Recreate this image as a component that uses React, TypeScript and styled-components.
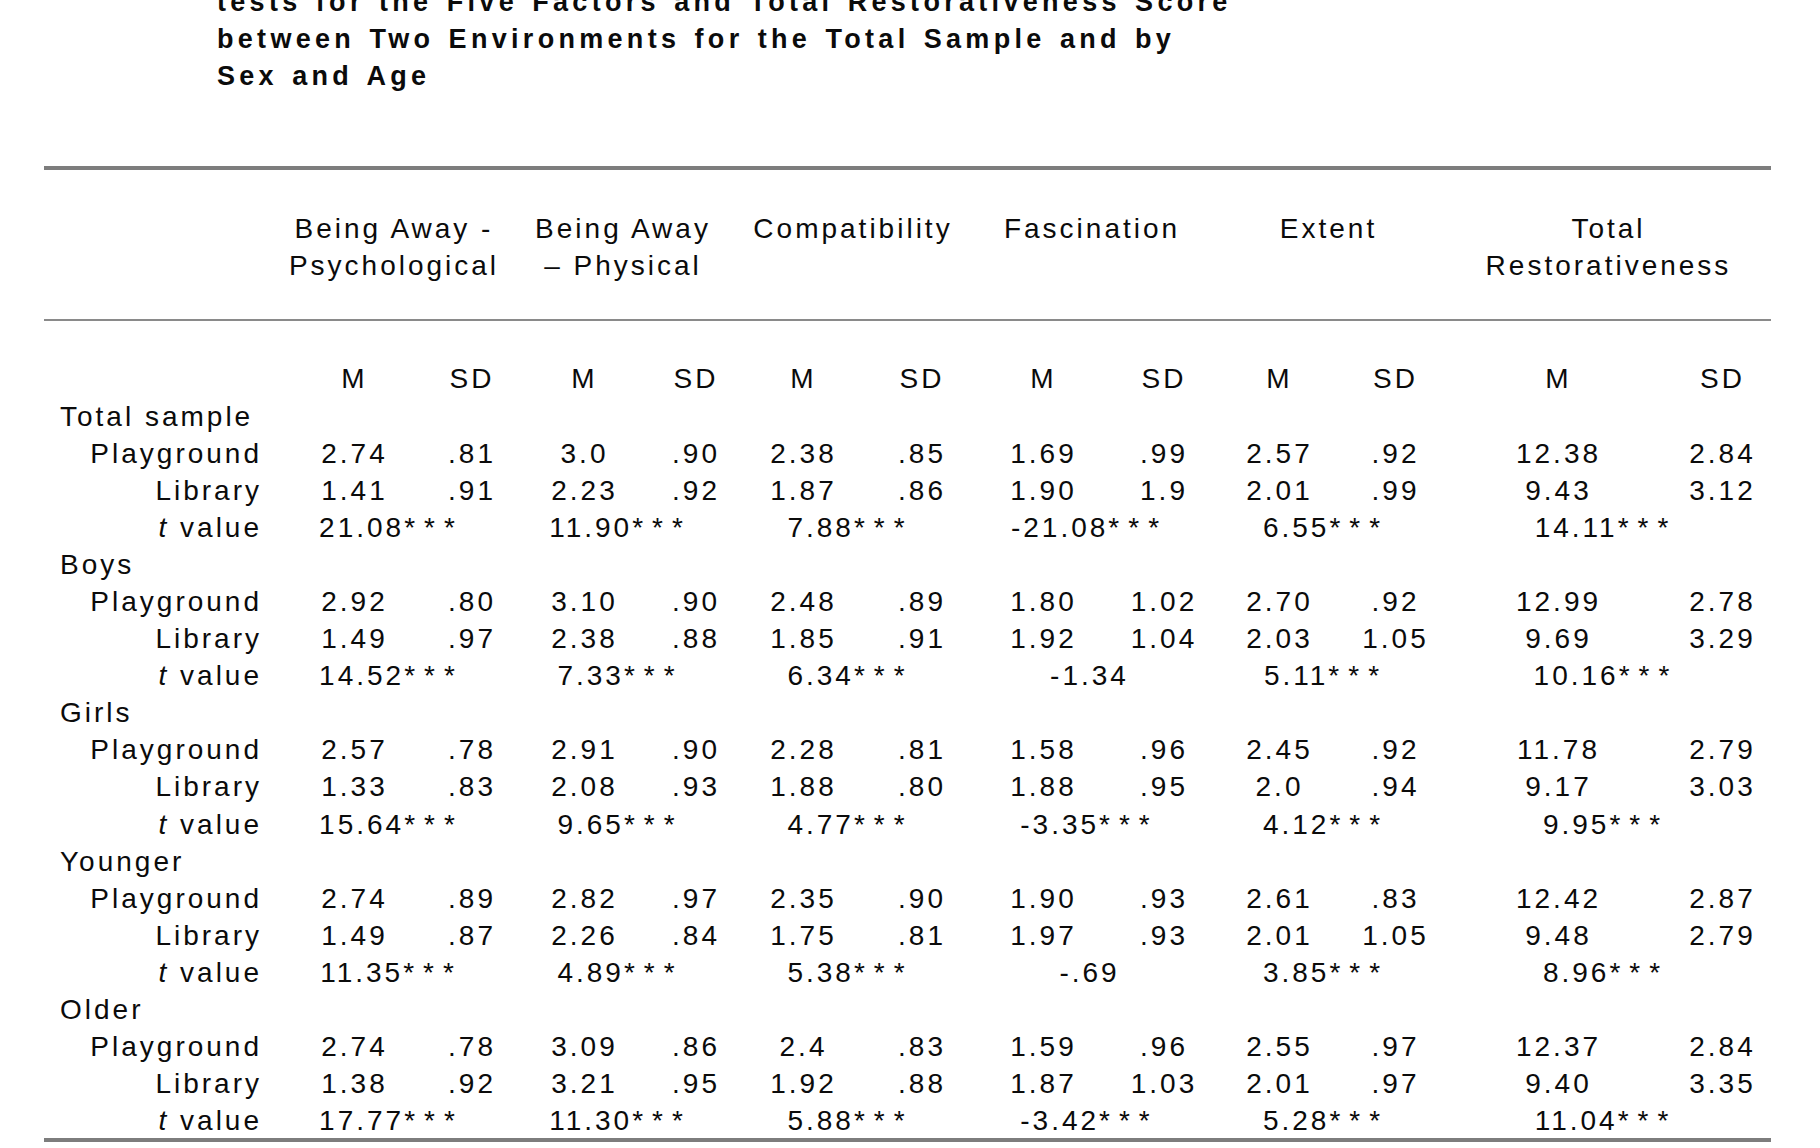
import React, { FC } from 'react';
import styled, { createGlobalStyle } from 'styled-components';

const COLUMNS =
  '231px 156px 79px 146px 77px 138px 99px 144px 97px 134px 98px 228px 100px';

const GlobalStyle = createGlobalStyle`
  html, body {
    margin: 0;
    padding: 0;
    background: #ffffff;
  }
  body {
    font-family: 'Liberation Sans', Arial, Helvetica, sans-serif;
    color: #0b0b0b;
    overflow: hidden;
  }
`;

const Page = styled.div`
  width: 1820px;
  height: 1148px;
  overflow: hidden;
`;

const Caption = styled.div`
  margin: -16px 0 0 217px;
  font-size: 27px;
  font-weight: 700;
  letter-spacing: 4.3px;
  word-spacing: 2.5px;
  line-height: 37px;
`;

const CaptionLine = styled.div`
  white-space: nowrap;
`;

const Table = styled.div`
  width: 1727px;
  margin: 71px 0 0 44px;
  border-top: 4px solid #7d7d7d;
  border-bottom: 4px solid #7d7d7d;
  font-size: 28px;
  letter-spacing: 3px;
`;

const HeadRow = styled.div`
  display: grid;
  grid-template-columns: ${COLUMNS};
  padding: 39.5px 0 35.5px;
  border-bottom: 2px solid #8a8a8a;
  line-height: 37px;
`;

const HeadCell = styled.div`
  grid-column: span 2;
  text-align: center;
  padding-left: 3px;
`;

const StatRow = styled.div<{ $height: number }>`
  display: grid;
  grid-template-columns: ${COLUMNS};
  height: ${(p) => p.$height}px;
  line-height: ${(p) => p.$height}px;
  white-space: nowrap;
`;

const SubHead = styled.div`
  padding-top: 37.5px;
`;

const Body = styled.div`
  margin-bottom: -1.5px;
`;

const Label = styled.div<{ $group?: boolean }>`
  text-align: ${(p) => (p.$group ? 'left' : 'right')};
  padding: ${(p) => (p.$group ? '0 0 0 16px' : '0 13px 0 0')};
`;

const Value = styled.div<{ $wide?: boolean }>`
  grid-column: ${(p) => (p.$wide ? 'span 2' : 'auto')};
  text-align: center;
  padding: ${(p) => (p.$wide ? '0 2px 0 0' : '0 0 0 3px')};
`;

const Stars = styled.span`
  letter-spacing: 9px;
`;

const Italic = styled.span`
  font-style: italic;
`;

type Pair = [string, string];

interface Group {
  name: string;
  playground: Pair[];
  library: Pair[];
  t: string[];
}

const headers: [string, string][] = [
  ['Being Away -', 'Psychological'],
  ['Being Away', '– Physical'],
  ['Compatibility', ''],
  ['Fascination', ''],
  ['Extent', ''],
  ['Total', 'Restorativeness'],
];

const groups: Group[] = [
  {
    name: 'Total sample',
    playground: [['2.74', '.81'], ['3.0', '.90'], ['2.38', '.85'], ['1.69', '.99'], ['2.57', '.92'], ['12.38', '2.84']],
    library: [['1.41', '.91'], ['2.23', '.92'], ['1.87', '.86'], ['1.90', '1.9'], ['2.01', '.99'], ['9.43', '3.12']],
    t: ['21.08***', '11.90***', '7.88***', '-21.08***', '6.55***', '14.11***'],
  },
  {
    name: 'Boys',
    playground: [['2.92', '.80'], ['3.10', '.90'], ['2.48', '.89'], ['1.80', '1.02'], ['2.70', '.92'], ['12.99', '2.78']],
    library: [['1.49', '.97'], ['2.38', '.88'], ['1.85', '.91'], ['1.92', '1.04'], ['2.03', '1.05'], ['9.69', '3.29']],
    t: ['14.52***', '7.33***', '6.34***', '-1.34', '5.11***', '10.16***'],
  },
  {
    name: 'Girls',
    playground: [['2.57', '.78'], ['2.91', '.90'], ['2.28', '.81'], ['1.58', '.96'], ['2.45', '.92'], ['11.78', '2.79']],
    library: [['1.33', '.83'], ['2.08', '.93'], ['1.88', '.80'], ['1.88', '.95'], ['2.0', '.94'], ['9.17', '3.03']],
    t: ['15.64***', '9.65***', '4.77***', '-3.35***', '4.12***', '9.95***'],
  },
  {
    name: 'Younger',
    playground: [['2.74', '.89'], ['2.82', '.97'], ['2.35', '.90'], ['1.90', '.93'], ['2.61', '.83'], ['12.42', '2.87']],
    library: [['1.49', '.87'], ['2.26', '.84'], ['1.75', '.81'], ['1.97', '.93'], ['2.01', '1.05'], ['9.48', '2.79']],
    t: ['11.35***', '4.89***', '5.38***', '-.69', '3.85***', '8.96***'],
  },
  {
    name: 'Older',
    playground: [['2.74', '.78'], ['3.09', '.86'], ['2.4', '.83'], ['1.59', '.96'], ['2.55', '.97'], ['12.37', '2.84']],
    library: [['1.38', '.92'], ['3.21', '.95'], ['1.92', '.88'], ['1.87', '1.03'], ['2.01', '.97'], ['9.40', '3.35']],
    t: ['17.77***', '11.30***', '5.88***', '-3.42***', '5.28***', '11.04***'],
  },
];

const ROW = 37.1;

const TValue: FC<{ value: string }> = ({ value }) => {
  const stars = value.endsWith('***');
  const num = stars ? value.slice(0, -3) : value;
  return (
    <Value $wide>
      {num}
      {stars && <Stars>***</Stars>}
    </Value>
  );
};

const PairRow: FC<{ label: string; values: Pair[] }> = ({ label, values }) => (
  <StatRow $height={ROW}>
    <Label>{label}</Label>
    {values.map(([m, sd], i) => (
      <React.Fragment key={i}>
        <Value>{m}</Value>
        <Value>{sd}</Value>
      </React.Fragment>
    ))}
  </StatRow>
);

const App: FC = () => (
  <Page>
    <GlobalStyle />
    <Caption>
      <CaptionLine>tests for the Five Factors and Total Restorativeness Score</CaptionLine>
      <CaptionLine>between Two Environments for the Total Sample and by</CaptionLine>
      <CaptionLine>Sex and Age</CaptionLine>
    </Caption>

    <Table>
      <HeadRow>
        <div />
        {headers.map(([a, b]) => (
          <HeadCell key={a + b}>
            <div>{a}</div>
            <div>{b || '\u00a0'}</div>
          </HeadCell>
        ))}
      </HeadRow>

      <SubHead>
        <StatRow $height={39}>
          <div />
          {headers.map((h) => (
            <React.Fragment key={h[0] + h[1]}>
              <Value>M</Value>
              <Value>SD</Value>
            </React.Fragment>
          ))}
        </StatRow>
      </SubHead>

      <Body>
        {groups.map((g) => (
          <React.Fragment key={g.name}>
            <StatRow $height={ROW}>
              <Label $group>{g.name}</Label>
            </StatRow>
            <PairRow label="Playground" values={g.playground} />
            <PairRow label="Library" values={g.library} />
            <StatRow $height={ROW}>
              <Label>
                <Italic>t</Italic> value
              </Label>
              {g.t.map((v, i) => (
                <TValue key={i} value={v} />
              ))}
            </StatRow>
          </React.Fragment>
        ))}
      </Body>
    </Table>
  </Page>
);

export default App;
